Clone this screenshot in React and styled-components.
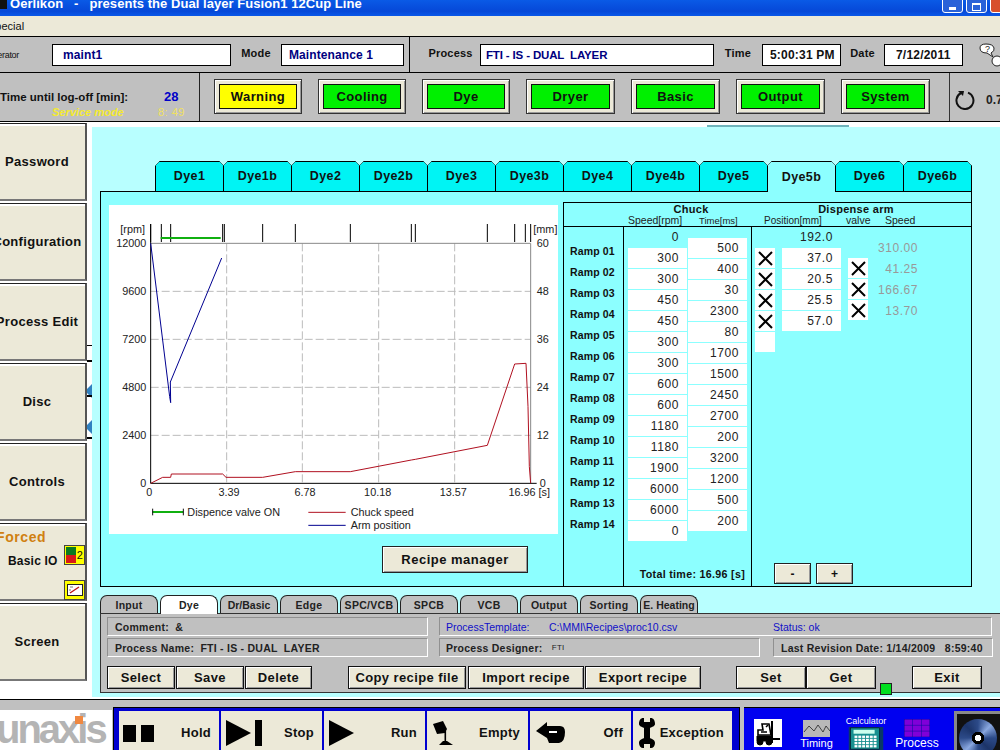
import React from 'react';
import styled, { createGlobalStyle } from 'styled-components';

const GlobalStyle = createGlobalStyle`
  * { box-sizing: border-box; }
  html, body { margin: 0; padding: 0; background: #fff; }
  body { font-family: "Liberation Sans", Arial, sans-serif; overflow: hidden; }
`;

const BUTTON_BG = '#ece9d8';
const GREY = '#c0c0c0';
const PANEL = '#8cffff';

const Page = styled.div`
  width: 1000px;
  height: 750px;
  display: flex;
  flex-direction: column;
  overflow: hidden;
  background: ${GREY};
`;

/* window chrome */
const TitleBar = styled.div`
  height: 16px;
  flex: none;
  display: flex;
  align-items: flex-end;
  overflow: hidden;
  background: linear-gradient(#0a5ae6, #0648d8 70%, #0a58e8);
`;

const AppIcon = styled.div`
  width: 7px;
  height: 9px;
  margin: 0 3px 7px 0;
  background: #111;
`;

const TitleText = styled.div`
  color: #fff;
  font-weight: bold;
  font-size: 13px;
  line-height: 16px;
  white-space: pre;
  letter-spacing: 0.05px;
  margin-bottom: 4px;
`;

const WindowButtons = styled.div`
  margin-left: auto;
  display: flex;
  gap: 3px;
  align-self: flex-start;
  margin-top: -8px;
  margin-right: -11px;
`;

const WindowButton = styled.div`
  width: 21px;
  height: 21px;
  border: 1px solid #fff;
  border-radius: 3px;
  background: ${(p) => (p.$close ? '#d8502c' : '#2a62d8')};
  display: flex;
  align-items: center;
  justify-content: center;
  padding-top: 8px;
`;

const MinGlyph = styled.div`
  width: 7px;
  height: 3px;
  background: #fff;
  margin-top: 3px;
`;

const MaxGlyph = styled.div`
  width: 9px;
  height: 8px;
  border: 1px solid #fff;
  border-top-width: 2px;
`;

const MenuBar = styled.div`
  height: 20px;
  flex: none;
  background: ${BUTTON_BG};
  display: flex;
  align-items: center;
  font-size: 11px;
  color: #111;
`;

const MenuItem = styled.div`
  margin-left: -12px;
`;

/* top status rows */
const StatusRow = styled.div`
  height: 37px;
  flex: none;
  display: flex;
  align-items: center;
  background: ${GREY};
  border-top: 1px solid #000;
  border-bottom: 1px solid #000;
  overflow: hidden;
`;

const SmallLabel = styled.div`
  width: 69px;
  margin-left: -17px;
  font-size: 9px;
  letter-spacing: -0.3px;
  padding-right: 33px;
  text-align: right;
  color: #111;
  white-space: nowrap;
`;

const FieldLabel = styled.div`
  width: ${(p) => p.$w}px;
  flex: none;
  font-size: 11px;
  font-weight: bold;
  letter-spacing: 0.2px;
  color: #111;
  text-align: center;
  padding-bottom: 3px;
  padding-left: ${(p) => p.$pl || 0}px;
`;

const Field = styled.div`
  width: ${(p) => p.$w}px;
  flex: none;
  height: 22px;
  background: #fff;
  border: 1px solid #000;
  font-size: ${(p) => (p.$tight ? 11.5 : 12)}px;
  font-weight: bold;
  line-height: 21px;
  color: ${(p) => (p.$dark ? '#111' : '#000080')};
  padding-left: ${(p) => p.$pl}px;
  white-space: pre;
  letter-spacing: ${(p) => (p.$tight ? '-0.15px' : p.$dark ? '0.2px' : '0.1px')};
`;

const RowDivider = styled.div`
  width: 1px;
  height: 100%;
  flex: none;
  margin-left: 5px;
  background: #000;
`;

const HelpBubble = styled.svg`
  flex: none;
  margin-left: 15px;
`;

const IndicatorRow = styled.div`
  height: 49px;
  flex: none;
  display: flex;
  background: ${GREY};
  border-bottom: 1px solid #000;
`;

const LogoffPanel = styled.div`
  width: 200px;
  flex: none;
  border-right: 1px solid #222;
  display: grid;
  grid-template-columns: 150px 1fr;
  grid-auto-rows: 15px;
  padding-top: 16px;
  align-items: center;
`;

const LogoffLabel = styled.div`
  font-size: 11.5px;
  font-weight: bold;
  color: #111;
  white-space: nowrap;
`;

const LogoffValue = styled.div`
  font-size: 13px;
  font-weight: bold;
  color: #0000c8;
  padding-left: 14px;
`;

const ServiceLabel = styled.div`
  font-size: 11px;
  font-weight: bold;
  font-style: italic;
  color: #f4ea30;
  padding-left: 52px;
  white-space: nowrap;
`;

const ServiceValue = styled.div`
  font-size: 11px;
  letter-spacing: 0.5px;
  color: #f0e060;
  padding-left: 8px;
`;

const IndicatorGroup = styled.div`
  display: flex;
  gap: 16px;
  padding: 6px 0 0 14px;
`;

const IndicatorButton = styled.div`
  width: ${(p) => p.$w || 88}px;
  height: 35px;
  padding: 4px;
  background: ${BUTTON_BG};
  border: 1px solid #333;
  box-shadow: inset 1px 1px 0 #fff, inset -1px -1px 0 #999;
`;

const IndicatorFace = styled.div`
  height: 100%;
  background: ${(p) => (p.$warn ? '#ffff00' : '#00f000')};
  border: 1px solid #111;
  display: flex;
  align-items: center;
  justify-content: center;
  font-size: 13px;
  font-weight: bold;
  letter-spacing: 0.4px;
  color: #111;
`;

const SpeedBox = styled.div`
  margin-left: auto;
  width: 51px;
  flex: none;
  border-left: 1px solid #333;
  display: flex;
  align-items: center;
  padding-left: 5px;
  padding-top: 6px;
  gap: 11px;
  font-size: 12px;
  font-weight: bold;
  color: #222;
  overflow: hidden;
`;

const SpeedIcon = styled.svg`
  flex: none;
`;

/* body */
const Body = styled.div`
  height: 578px;
  flex: none;
  display: flex;
  background: #fff;
  border-bottom: 1px solid #000;
  overflow: hidden;
`;

const Sidebar = styled.div`
  width: 98px;
  flex: none;
  margin-left: -11px;
  display: flex;
  flex-direction: column;
  gap: 2px;
  padding-top: 1px;
`;

const SideButton = styled.div`
  height: 78px;
  flex: none;
  background: ${BUTTON_BG};
  border-right: 2px solid #555;
  border-bottom: 2px solid #777;
  box-shadow: inset 0 2px 0 #fff;
  border-top: 1px solid #222;
  display: flex;
  align-items: center;
  justify-content: center;
  font-size: 13px;
  font-weight: bold;
  letter-spacing: 0.3px;
  color: #111;
  white-space: nowrap;
`;

const ForcedButton = styled(SideButton)`
  display: block;
  padding: 5px 0 0 7px;
`;

const ForcedLabel = styled.div`
  color: #d08010;
  font-size: 14px;
  line-height: 16px;
  letter-spacing: 0.6px;
`;

const ForcedRow = styled.div`
  display: flex;
  align-items: flex-start;
  justify-content: ${(p) => (p.$end ? 'flex-end' : 'space-between')};
  margin-top: ${(p) => p.$mt || 0}px;
  padding: 0 0 0 12px;
`;

const BasicLabel = styled.div`
  font-size: 12px;
  line-height: 15px;
  letter-spacing: 0.2px;
  margin-top: 9px;
`;

const StateBadge = styled.div`
  width: 21px;
  height: 20px;
  background: #ffff00;
  border: 1px solid #444;
  display: flex;
  align-items: center;
  justify-content: center;
  gap: 1px;
  font-size: 11px;
  font-weight: normal;
`;

const Gutter = styled.div`
  width: 5px;
  flex: none;
  padding-top: 1px;
  line-height: 0;
`;

const Main = styled.div`
  flex: 1;
  min-width: 0;
  display: flex;
  flex-direction: column;
  width: 908px;
`;

const TopStrip = styled.div`
  height: 5px;
  flex: none;
  padding-left: 615px;
`;

const TopPeek = styled.div`
  width: 142px;
  height: 2px;
  margin-top: 3px;
  background: #70b4bc;
`;

const Workspace = styled.div`
  height: 570px;
  flex: none;
  background: #b8ffff;
  padding: 34px 0 0 8px;
  display: flex;
  flex-direction: column;
`;

const DyeTabs = styled.div`
  display: flex;
  margin-left: 55px;
  height: 31px;
  flex: none;
  position: relative;
  z-index: 1;
`;

const DyeTab = styled.div`
  width: 69px;
  height: ${(p) => (p.$active ? 31 : 30)}px;
  flex: none;
  border: 1px solid #000;
  border-top: none;
  border-bottom: none;
  margin-right: -1px;
  clip-path: polygon(5px 0, calc(100% - 5px) 0, 100% 5px, 100% 100%, 0 100%, 0 5px);
  background-origin: border-box;
  background-image:
    linear-gradient(135deg, transparent 2.6px, #000 2.6px 3.9px, transparent 3.9px),
    linear-gradient(225deg, transparent 2.6px, #000 2.6px 3.9px, transparent 3.9px),
    linear-gradient(#000, #000);
  background-size: 100% 100%, 100% 100%, 100% 1px;
  background-repeat: no-repeat;
  background-color: ${(p) => (p.$active ? PANEL : '#00f4f4')};
  display: flex;
  align-items: center;
  justify-content: center;
  font-size: 12.5px;
  font-weight: bold;
  letter-spacing: 0.4px;
  color: #111;
`;

const RecipePanel = styled.div`
  width: 872px;
  height: 396px;
  flex: none;
  margin-top: -1px;
  background: ${PANEL};
  border: 1px solid #000;
  display: flex;
`;

const ChartColumn = styled.div`
  width: 462px;
  flex: none;
  padding: 13px 0 0 8px;
`;

const ChartCard = styled.svg`
  display: block;
  background: #fff;
`;

const RecipeManager = styled.div`
  width: 146px;
  height: 27px;
  margin: 12px 0 0 273px;
  background: ${BUTTON_BG};
  border: 1px solid #222;
  box-shadow: inset 1px 1px 0 #fff, inset -1px -1px 0 #999;
  display: flex;
  align-items: center;
  justify-content: center;
  font-size: 13px;
  font-weight: bold;
  letter-spacing: 0.5px;
  color: #111;
`;

const RecipeTable = styled.div`
  flex: 1;
  margin-top: 10px;
  border-top: 1px solid #000;
  border-left: 1px solid #000;
  display: flex;
  flex-direction: column;
  min-width: 0;
`;

const TableHead = styled.div`
  height: 24px;
  flex: none;
  border-bottom: 1px solid #000;
  display: grid;
  grid-template-columns: 59px 128px 1fr;
`;

const HeadGroup = styled.div`
  display: flex;
  flex-direction: column;
`;

const HeadTitle = styled.div`
  font-size: 11px;
  font-weight: bold;
  line-height: 12px;
  letter-spacing: 0.3px;
  color: #111;
  text-align: center;
  padding-left: ${(p) => p.$pl || 0}px;
  padding-right: ${(p) => p.$pr || 0}px;
`;

const HeadLabels = styled.div`
  display: flex;
  line-height: 11px;
  color: #222;
  white-space: nowrap;
  padding-left: ${(p) => p.$pl}px;
`;

const HeadLabel = styled.span`
  width: ${(p) => p.$w}px;
  flex: none;
  font-size: ${(p) => p.$size || 10.5}px;
`;

const TableBody = styled.div`
  flex: 1;
  display: grid;
  grid-template-columns: 59px 128px 1fr;
  min-height: 0;
`;

const RampColumn = styled.div`
  padding: 14px 0 0 6px;
`;

const RampLabel = styled.div`
  height: 21px;
  line-height: 21px;
  font-size: 10.5px;
  font-weight: bold;
  letter-spacing: 0.15px;
  color: #111;
  white-space: nowrap;
`;

const ValueColumn = styled.div`
  border-left: 1px solid #000;
  display: flex;
  flex-direction: column;
`;

const Stacks = styled.div`
  display: flex;
  align-items: flex-start;
  padding-left: ${(p) => p.$pl}px;
`;

const Stack = styled.div`
  width: ${(p) => p.$w}px;
  flex: none;
  margin-left: ${(p) => p.$ml || 0}px;
  padding-top: ${(p) => p.$pt || 0}px;
`;

const Value = styled.div`
  height: 20px;
  margin-bottom: 1px;
  background: ${(p) => (p.$bare ? 'transparent' : '#fff')};
  font-size: 12px;
  line-height: 20px;
  letter-spacing: 0.6px;
  color: #222;
  text-align: right;
  padding-right: 8px;
`;

const CheckCell = styled.div`
  height: 20px;
  margin-bottom: 1px;
  background: #fff;
  display: flex;
  align-items: center;
  justify-content: center;
`;

const SpeedValue = styled.div`
  height: 21px;
  line-height: 21px;
  font-size: 12px;
  letter-spacing: 0.55px;
  color: #999;
  text-align: right;
`;

const TotalTime = styled.div`
  margin-top: auto;
  height: 24px;
  font-size: 10.7px;
  font-weight: bold;
  letter-spacing: 0.3px;
  color: #111;
  text-align: right;
  padding-right: 6px;
  line-height: 24px;
  white-space: nowrap;
`;

const StepButtons = styled.div`
  margin-top: auto;
  display: flex;
  gap: 5px;
  padding: 0 0 2px 22px;
`;

const StepButton = styled.div`
  width: 37px;
  height: 21px;
  background: ${BUTTON_BG};
  border: 1px solid #222;
  box-shadow: inset 1px 1px 0 #fff, inset -1px -1px 0 #999;
  display: flex;
  align-items: center;
  justify-content: center;
  font-size: 12px;
  font-weight: bold;
  color: #111;
`;

/* lower tabs and info panel */
const LowerTabs = styled.div`
  display: flex;
  gap: 2px;
  height: 18px;
  flex: none;
  margin-top: 8px;
  position: relative;
  z-index: 1;
`;

const LowerTab = styled.div`
  width: 58px;
  height: ${(p) => (p.$active ? 19 : 18)}px;
  flex: none;
  background: ${(p) => (p.$active ? '#fff' : GREY)};
  border: 1px solid #222;
  border-bottom: none;
  border-radius: 7px 8px 0 0;
  display: flex;
  align-items: center;
  justify-content: center;
  font-size: 10.5px;
  font-weight: bold;
  letter-spacing: ${(p) => (p.$tight ? 0 : 0.3)}px;
  color: #222;
  white-space: nowrap;
`;

const InfoPanel = styled.div`
  height: 80px;
  flex: none;
  margin-top: 0;
  width: 920px;
  background: ${GREY};
  border: 1px solid #333;
  padding: 3px 0 0 6px;
  display: flex;
  flex-direction: column;
`;

const InfoGrid = styled.div`
  display: flex;
  gap: 11px;
`;

const InfoColumn = styled.div`
  display: flex;
  flex-direction: column;
  gap: 2px;
`;

const InfoLine = styled.div`
  display: flex;
  gap: 13px;
`;

const InfoBox = styled.div`
  width: ${(p) => p.$w}px;
  height: 19px;
  flex: none;
  border: 1px solid;
  border-color: #909090 #fff #fff #909090;
  display: flex;
  align-items: center;
  padding-left: ${(p) => p.$pl || 7}px;
  font-size: 10.5px;
  font-weight: bold;
  letter-spacing: 0.25px;
  color: #222;
  white-space: pre;
`;

const BlueText = styled.span`
  font-weight: normal;
  font-size: 10.5px;
  letter-spacing: 0;
  color: #1010c8;
  width: ${(p) => (p.$w ? `${p.$w}px` : 'auto')};
  flex: none;
`;

const Tiny = styled.span`
  font-weight: normal;
  font-size: 8px;
  margin-left: 3px;
`;

const ActionRow = styled.div`
  display: flex;
  align-items: flex-start;
  margin-top: 9px;
`;

const ActionButton = styled.div`
  width: ${(p) => p.$w}px;
  height: 23px;
  flex: none;
  margin-left: ${(p) => p.$ml || 0}px;
  background: ${BUTTON_BG};
  border: 1px solid #111;
  box-shadow: inset 1px 1px 0 #fff, inset -1px -1px 0 #999;
  display: flex;
  align-items: center;
  justify-content: center;
  font-size: 13px;
  font-weight: bold;
  letter-spacing: 0.4px;
  color: #111;
  white-space: nowrap;
`;

const StatusLamp = styled.div`
  width: 12px;
  height: 12px;
  flex: none;
  margin: 17px 0 0 4px;
  background: #00e020;
  border: 1px solid #222;
`;

/* footer */
const Footer = styled.div`
  flex: 1;
  display: flex;
  padding-top: 7px;
  overflow: hidden;
`;

const LogoBox = styled.div`
  width: 112px;
  flex: none;
  margin-top: 3px;
  background: #fff;
  position: relative;
  overflow: hidden;
`;

const LogoText = styled.div`
  font-size: 40px;
  line-height: 38px;
  font-weight: bold;
  letter-spacing: -3px;
  color: #b4b4b4;
  margin-left: -4px;
`;

const LogoDot = styled.div`
  position: absolute;
  left: 75px;
  top: 6px;
  width: 8px;
  height: 8px;
  background: #f08840;
`;

const CommandBar = styled.div`
  width: 627px;
  flex: none;
  background: #0000d0;
  border: 1px solid #000;
  border-bottom: none;
  padding: 3px 0 0 5px;
  display: flex;
  gap: 2px;
  margin-left: 1px;
`;

const CommandButton = styled.div`
  width: ${(p) => p.$w || 101}px;
  flex: none;
  background: ${BUTTON_BG};
  display: flex;
  align-items: center;
  justify-content: space-between;
  padding: 4px 8px 0 ${(p) => p.$pl || 4}px;
  font-size: 13px;
  font-weight: bold;
  letter-spacing: 0.25px;
  color: #111;
`;

const LauncherBar = styled.div`
  flex: 1;
  margin-left: 4px;
  background: #0000f0;
  display: flex;
  padding-left: 10px;
  border-top: 1px solid #000;
`;

const LauncherItem = styled.div`
  width: ${(p) => p.$w}px;
  flex: none;
  margin-left: ${(p) => p.$ml || 0}px;
  padding-top: ${(p) => p.$pt || 0}px;
  display: flex;
  flex-direction: column;
  align-items: center;
  color: #fff;
  font-size: ${(p) => p.$size || 11}px;
  line-height: 12px;
  white-space: nowrap;
`;

const ForkliftTile = styled.div`
  width: 28px;
  height: 28px;
  background: #fff;
  margin-top: 11px;
  display: flex;
  align-items: center;
  justify-content: center;
`;

const DiscTile = styled.div`
  width: 46px;
  flex: none;
  margin-left: auto;
  margin-top: 3px;
  border: 3px solid #888;
  border-right: none;
  border-bottom: none;
  background: #111;
  padding: 5px 0 0 2px;
  overflow: hidden;
`;

const Disc = styled.div`
  width: 38px;
  height: 38px;
  border-radius: 50%;
  background:
    radial-gradient(circle, #fff 0 3px, #000 3.5px 6px, transparent 6.5px),
    conic-gradient(#2c4a88, #8aa8e0, #2c4a88, #1c3468, #2c4a88, #8aa8e0, #2c4a88, #1c3468, #2c4a88);
`;

const dyeTabs = ['Dye1', 'Dye1b', 'Dye2', 'Dye2b', 'Dye3', 'Dye3b', 'Dye4', 'Dye4b', 'Dye5', 'Dye5b', 'Dye6', 'Dye6b'];
const lowerTabs = ['Input', 'Dye', 'Dr/Basic', 'Edge', 'SPC/VCB', 'SPCB', 'VCB', 'Output', 'Sorting', 'E. Heating'];
const indicators = [
  ['Warning', 88, true],
  ['Cooling', 88],
  ['Dye', 88],
  ['Dryer', 89],
  ['Basic', 89],
  ['Output', 89],
  ['System', 89],
];
const speeds = ['300', '300', '450', '450', '300', '300', '600', '600', '1180', '1180', '1900', '6000', '6000', '0'];
const times = ['500', '400', '30', '2300', '80', '1700', '1500', '2450', '2700', '200', '3200', '1200', '500', '200'];
const positions = ['37.0', '20.5', '25.5', '57.0'];
const armSpeeds = ['310.00', '41.25', '166.67', '13.70'];

const redLine = [[152, 880], [188, 862], [212, 862], [214, 852], [368, 852], [378, 862], [488, 862], [586, 845], [751, 845], [934, 810], [946, 808], [1162, 766], [1244, 522], [1278, 520], [1284, 650], [1288, 830], [1292, 880]];
const blueLine = [[152, 160], [209, 620], [212, 638], [211, 576], [365, 204]];
const marks = [152, 184, 212, 368, 373, 488, 586, 751, 934, 946, 1162, 1244, 1276, 1292];
const gridX = [380, 607, 836, 1064];
const gridY = [304, 448, 592, 736];
const leftAxis = [['12000', 160], ['9600', 304], ['7200', 448], ['4800', 592], ['2400', 736], ['0', 880]];
const rightAxis = [['60', 160], ['48', 304], ['36', 448], ['24', 592], ['12', 736], ['0', 880]];
const bottomAxis = [['0', 148], ['3.39', 387], ['6.78', 615], ['10.18', 833], ['13.57', 1060], ['16.96', 1266]];

const toPoints = (line) => line.map((p) => p.join(',')).join(' ');

const chartFont = { fontFamily: '"Liberation Sans", Arial, sans-serif', fontSize: 32.5, fill: '#222' };

// drawn on the 3x coordinates of the picture, so one px of stroke is 3 units
const Chart = () => (
  <ChartCard width="449" height="329" viewBox="27 45 1347 987">
    {gridY.map((y) => (
      <line key={y} x1="152" x2="1292" y1={y} y2={y} stroke="#bbb" strokeWidth="3" strokeDasharray="24 9" />
    ))}
    {gridX.map((x) => (
      <line key={x} x1={x} x2={x} y1="160" y2="880" stroke="#bbb" strokeWidth="3" strokeDasharray="24 9" />
    ))}
    <line x1="152" x2="1292" y1="160" y2="160" stroke="#888" strokeWidth="3" />
    <line x1="1292" x2="1292" y1="160" y2="880" stroke="#888" strokeWidth="3" />
    <line x1="152" x2="152" y1="102" y2="880" stroke="#000" strokeWidth="3" />
    <line x1="152" x2="1310" y1="880" y2="880" stroke="#000" strokeWidth="3" />
    {marks.map((x) => (
      <line key={x} x1={x} x2={x} y1="102" y2="156" stroke="#000" strokeWidth="3" />
    ))}
    <line x1="182" x2="362" y1="144" y2="144" stroke="#10b010" strokeWidth="6" />
    <polyline points={toPoints(redLine)} fill="none" stroke="#b01020" strokeWidth="3" />
    <polyline points={toPoints(blueLine)} fill="none" stroke="#000090" strokeWidth="3" />
    <text {...chartFont} x="61" y="129">[rpm]</text>
    <text {...chartFont} x="1300" y="129">[mm]</text>
    {leftAxis.map(([t, y]) => (
      <text key={t} {...chartFont} x="139" y={y + 12} textAnchor="end">{t}</text>
    ))}
    {rightAxis.map(([t, y]) => (
      <text key={t} {...chartFont} x="1328" y={y + 12} textAnchor="middle">{t}</text>
    ))}
    {bottomAxis.map(([t, x]) => (
      <text key={t} {...chartFont} x={x} y="918" textAnchor="middle">{t}</text>
    ))}
    <text {...chartFont} x="1333" y="918" textAnchor="middle">[s]</text>
    <line x1="157" x2="250" y1="966" y2="966" stroke="#10b010" strokeWidth="6" />
    <line x1="158" x2="158" y1="956" y2="976" stroke="#111" strokeWidth="3" />
    <line x1="250" x2="250" y1="956" y2="976" stroke="#111" strokeWidth="3" />
    <text {...chartFont} x="262" y="978">Dispence valve ON</text>
    <line x1="625" x2="737" y1="967" y2="967" stroke="#b01020" strokeWidth="3" />
    <text {...chartFont} x="752" y="978">Chuck speed</text>
    <line x1="625" x2="737" y1="1006" y2="1006" stroke="#000090" strokeWidth="3" />
    <text {...chartFont} x="752" y="1017">Arm position</text>
  </ChartCard>
);

const Cross = () => (
  <svg width="15" height="15" viewBox="0 0 15 15">
    <path d="M1 1 L14 14 M14 1 L1 14" stroke="#000" strokeWidth="2" />
  </svg>
);

const HoldIcon = () => (
  <svg width="32" height="18" viewBox="0 0 32 18">
    <rect x="0" y="1" width="13" height="17" />
    <rect x="18" y="1" width="13" height="17" />
  </svg>
);

const StopIcon = () => (
  <svg width="37" height="26" viewBox="0 0 37 26">
    <polygon points="0,0 25,13 0,26" />
    <rect x="29" y="0" width="7" height="26" />
  </svg>
);

const RunIcon = () => (
  <svg width="26" height="26" viewBox="0 0 26 26">
    <polygon points="0,0 25,13 0,26" />
  </svg>
);

const PourIcon = () => (
  <svg width="22" height="24" viewBox="0 0 22 24">
    <polygon points="1,3 11,0 15,8 13,12 5,13" />
    <rect x="12.5" y="10" width="1.6" height="10" />
    <polygon points="7,24 11,20 15,20 21,24" />
  </svg>
);

const OffIcon = () => (
  <svg width="29" height="21" viewBox="0 0 29 21">
    <path d="M0 9 L11 0 L11 4 L24 4 Q29 4 29 10 Q29 20 23 21 L13 21 L11 16 Z" />
    <rect x="13" y="9" width="8" height="2" fill="#fff" />
  </svg>
);

const WrenchIcon = () => (
  <svg width="16" height="30" viewBox="0 0 16 30">
    <path d="M0 6 C0 2 2 0 4 0 L5 0 L5 4 L11 4 L11 0 L12 0 C14 0 16 2 16 6 C16 8 13 9 11 10 L11 20 C13 21 16 22 16 25 C16 28 14 30 12 30 L11 30 L11 26 L5 26 L5 30 L4 30 C2 30 0 28 0 25 C0 22 3 21 5 20 L5 10 C3 9 0 8 0 6 Z" />
  </svg>
);

const ForkliftIcon = () => (
  <svg width="26" height="26" viewBox="0 0 26 26" fill="none" stroke="#000">
    <path d="M7 4 L14 4 L16 15 L3 15 L3 10 L8 10 Z" strokeWidth="1.6" />
    <path d="M17 1 L17 23 M17 19 L25 19" strokeWidth="2" />
    <path d="M11 7 l2 -2 M6 12 h6" strokeWidth="1.5" />
    <path d="M2 16 L17 16 L17 21 L2 21 Z" fill="#000" strokeWidth="1" />
    <circle cx="5" cy="22" r="3" fill="#000" />
    <circle cx="14" cy="22" r="3" fill="#000" />
  </svg>
);

const TimingIcon = () => (
  <svg width="27" height="17" viewBox="0 0 27 17">
    <rect width="27" height="17" fill="#b8b8b8" />
    <path d="M1 12 L6 6 L11 11 L15 5 L20 12 L23 6 L27 11" fill="none" stroke="#222" strokeWidth="0.8" />
  </svg>
);

const CalculatorIcon = () => (
  <svg width="36" height="24" viewBox="0 0 36 24">
    <rect width="36" height="24" fill="#083868" />
    <rect x="2" y="1" width="30" height="22" fill="#189090" stroke="#000" strokeWidth="0.5" />
    <rect x="5" y="3" width="22" height="4" fill="#cfe" />
    {[0, 1, 2, 3].map((r) =>
      [0, 1, 2, 3, 4, 5].map((c) => (
        <rect key={`${r}-${c}`} x={6 + c * 4} y={9 + r * 3.3} width="3" height="2.4" fill="#fff" />
      )),
    )}
  </svg>
);

const ProcessIcon = () => (
  <svg width="26" height="18" viewBox="0 0 26 18">
    <rect width="26" height="18" fill="#000a9c" />
    {[0, 1, 2].map((r) =>
      [0, 1, 2].map((c) => (
        <rect key={`${r}-${c}`} x={0.5 + c * 8.5} y={0.5 + r * 5.9} width="8" height="5.4" fill="#8000d8" />
      )),
    )}
  </svg>
);

const IoIcon = () => (
  <svg width="10" height="16" viewBox="0 0 10 16">
    <rect width="10" height="8" fill="#0a7a20" />
    <rect y="8" width="10" height="8" fill="#d81818" />
  </svg>
);

const GaugeIcon = () => (
  <svg width="16" height="12" viewBox="0 0 16 12">
    <rect x="0.5" y="0.5" width="15" height="11" fill="#fff" stroke="#222" />
    <path d="M3 9 L12 3" stroke="#c01010" strokeWidth="1.3" />
    <path d="M3 3 h3 M2 6 h2" stroke="#555" strokeWidth="0.8" />
  </svg>
);

const SideDashes = () => (
  <svg width="5" height="320" viewBox="0 0 5 320">
    <rect y="222" width="5" height="1" />
    <rect y="237" width="5" height="2" />
    <polygon points="0,266 5,261 5,275 0,270" fill="#3080c0" />
    <rect y="272" width="5" height="2" />
    <polygon points="0,302 5,297 5,311 0,306" fill="#3080c0" />
    <rect y="314" width="5" height="2" />
  </svg>
);

export default function App() {
  return (
    <Page>
      <GlobalStyle />
      <TitleBar>
        <AppIcon />
        <TitleText>{'Oerlikon   -   presents the Dual layer Fusion1 12Cup Line'}</TitleText>
        <WindowButtons>
          <WindowButton><MinGlyph /></WindowButton>
          <WindowButton><MaxGlyph /></WindowButton>
          <WindowButton $close />
        </WindowButtons>
      </TitleBar>
      <MenuBar>
        <MenuItem>Special</MenuItem>
      </MenuBar>
      <StatusRow>
        <SmallLabel>Operator</SmallLabel>
        <Field $w={179} $pl={10}>maint1</Field>
        <FieldLabel $w={50}>Mode</FieldLabel>
        <Field $w={123} $pl={7}>Maintenance 1</Field>
        <RowDivider />
        <FieldLabel $w={70} $pl={11}>Process</FieldLabel>
        <Field $w={234} $pl={5} $tight>{'FTI - IS - DUAL  LAYER'}</Field>
        <FieldLabel $w={48}>Time</FieldLabel>
        <Field $w={79} $pl={7} $dark>5:00:31 PM</Field>
        <FieldLabel $w={43}>Date</FieldLabel>
        <Field $w={79} $pl={11} $dark>7/12/2011</Field>
        <HelpBubble width="22" height="24" viewBox="0 0 22 24">
          <path d="M2 5 Q2 1 8 1 Q15 1 16 5 Q17 8 13 10 L15 14 L9 10 Q2 10 2 5 Z" fill="#fff" stroke="#222" />
          <text x="7" y="9" fontSize="9" fontFamily="Liberation Sans" fill="#222">?</text>
          <circle cx="19" cy="18" r="5" fill="#fff" stroke="#222" />
        </HelpBubble>
      </StatusRow>
      <IndicatorRow>
        <LogoffPanel>
          <LogoffLabel>Time until log-off [min]:</LogoffLabel>
          <LogoffValue>28</LogoffValue>
          <ServiceLabel>Service mode</ServiceLabel>
          <ServiceValue>8: 49</ServiceValue>
        </LogoffPanel>
        <IndicatorGroup>
          {indicators.map(([label, w, warn]) => (
            <IndicatorButton key={label} $w={w}>
              <IndicatorFace $warn={warn}>{label}</IndicatorFace>
            </IndicatorButton>
          ))}
        </IndicatorGroup>
        <SpeedBox>
          <SpeedIcon width="20" height="20" viewBox="0 0 20 20">
            <path d="M6 3 A8.5 8.5 0 1 0 13 2.6" fill="none" stroke="#111" strokeWidth="2" />
            <polygon points="3,1 9,1 8,6" fill="#111" />
          </SpeedIcon>
          0.7
        </SpeedBox>
      </IndicatorRow>
      <Body>
        <Sidebar>
          <SideButton>Password</SideButton>
          <SideButton>Configuration</SideButton>
          <SideButton>Process Edit</SideButton>
          <SideButton>Disc</SideButton>
          <SideButton>Controls</SideButton>
          <ForcedButton>
            <ForcedLabel>Forced</ForcedLabel>
            <ForcedRow>
              <BasicLabel>Basic IO</BasicLabel>
              <StateBadge><IoIcon />2</StateBadge>
            </ForcedRow>
            <ForcedRow $end $mt={11}>
              <StateBadge><GaugeIcon /></StateBadge>
            </ForcedRow>
          </ForcedButton>
          <SideButton>Screen</SideButton>
        </Sidebar>
        <Gutter><SideDashes /></Gutter>
        <Main>
          <TopStrip><TopPeek /></TopStrip>
          <Workspace>
            <DyeTabs>
              {dyeTabs.map((t) => (
                <DyeTab key={t} $active={t === 'Dye5b'}>{t}</DyeTab>
              ))}
            </DyeTabs>
            <RecipePanel>
              <ChartColumn>
                <Chart />
                <RecipeManager>Recipe manager</RecipeManager>
              </ChartColumn>
              <RecipeTable>
                <TableHead>
                  <div />
                  <HeadGroup>
                    <HeadTitle $pl={8}>Chuck</HeadTitle>
                    <HeadLabels $pl={5}>
                      <HeadLabel $w={71}>Speed[rpm]</HeadLabel>
                      <HeadLabel $w={50} $size={9.5}>Time[ms]</HeadLabel>
                    </HeadLabels>
                  </HeadGroup>
                  <HeadGroup>
                    <HeadTitle $pr={10}>Dispense arm</HeadTitle>
                    <HeadLabels $pl={13}>
                      <HeadLabel $w={82} $size={10}>Position[mm]</HeadLabel>
                      <HeadLabel $w={39}>valve</HeadLabel>
                      <HeadLabel $w={40}>Speed</HeadLabel>
                    </HeadLabels>
                  </HeadGroup>
                </TableHead>
                <TableBody>
                  <RampColumn>
                    {speeds.map((_, i) => (
                      <RampLabel key={i}>Ramp {String(i + 1).padStart(2, '0')}</RampLabel>
                    ))}
                  </RampColumn>
                  <ValueColumn>
                    <Stacks $pl={4}>
                      <Stack $w={59}>
                        <Value $bare>0</Value>
                        {speeds.map((v, i) => (
                          <Value key={i}>{v}</Value>
                        ))}
                      </Stack>
                      <Stack $w={59} $ml={1} $pt={11}>
                        {times.map((v, i) => (
                          <Value key={i}>{v}</Value>
                        ))}
                      </Stack>
                    </Stacks>
                    <TotalTime>Total time: 16.96 [s]</TotalTime>
                  </ValueColumn>
                  <ValueColumn>
                    <Stacks $pl={3}>
                      <Stack $w={20} $pt={21}>
                        {positions.map((v) => (
                          <CheckCell key={v}><Cross /></CheckCell>
                        ))}
                        <CheckCell />
                      </Stack>
                      <Stack $w={59} $ml={7}>
                        <Value $bare>192.0</Value>
                        {positions.map((v) => (
                          <Value key={v}>{v}</Value>
                        ))}
                      </Stack>
                      <Stack $w={20} $ml={7} $pt={31}>
                        <CheckCell><Cross /></CheckCell>
                        <CheckCell><Cross /></CheckCell>
                        <CheckCell><Cross /></CheckCell>
                      </Stack>
                      <Stack $w={50} $pt={11}>
                        {armSpeeds.map((v) => (
                          <SpeedValue key={v}>{v}</SpeedValue>
                        ))}
                      </Stack>
                    </Stacks>
                    <StepButtons>
                      <StepButton>-</StepButton>
                      <StepButton>+</StepButton>
                    </StepButtons>
                  </ValueColumn>
                </TableBody>
              </RecipeTable>
            </RecipePanel>
            <LowerTabs>
              {lowerTabs.map((t) => (
                <LowerTab key={t} $active={t === 'Dye'} $tight={t.length > 7}>{t}</LowerTab>
              ))}
            </LowerTabs>
            <InfoPanel>
              <InfoGrid>
                <InfoColumn>
                  <InfoBox $w={321}>{'Comment:  &'}</InfoBox>
                  <InfoBox $w={321}>{'Process Name:  FTI - IS - DUAL  LAYER'}</InfoBox>
                </InfoColumn>
                <InfoColumn>
                  <InfoBox $w={553} $pl={6}>
                    <BlueText $w={103}>ProcessTemplate:</BlueText>
                    <BlueText $w={224}>{'C:\\MMI\\Recipes\\proc10.csv'}</BlueText>
                    <BlueText>Status: ok</BlueText>
                  </InfoBox>
                  <InfoLine>
                    <InfoBox $w={321} $pl={6}>Process Designer:  <Tiny>FTI</Tiny></InfoBox>
                    <InfoBox $w={220}>{'Last Revision Date: 1/14/2009   8:59:40'}</InfoBox>
                  </InfoLine>
                </InfoColumn>
              </InfoGrid>
              <ActionRow>
                <ActionButton $w={68}>Select</ActionButton>
                <ActionButton $w={68} $ml={1}>Save</ActionButton>
                <ActionButton $w={67} $ml={1}>Delete</ActionButton>
                <ActionButton $w={118} $ml={36}>Copy recipe file</ActionButton>
                <ActionButton $w={116} $ml={2}>Import recipe</ActionButton>
                <ActionButton $w={116} $ml={1}>Export recipe</ActionButton>
                <ActionButton $w={70} $ml={35}>Set</ActionButton>
                <ActionButton $w={70}>Get</ActionButton>
                <StatusLamp />
                <ActionButton $w={70} $ml={20}>Exit</ActionButton>
              </ActionRow>
            </InfoPanel>
          </Workspace>
        </Main>
      </Body>
      <Footer>
        <LogoBox>
          <LogoText>unaxis</LogoText>
          <LogoDot />
        </LogoBox>
        <CommandBar>
          <CommandButton $w={100}><HoldIcon />Hold</CommandButton>
          <CommandButton $pl={5}><StopIcon />Stop</CommandButton>
          <CommandButton $pl={5}><RunIcon />Run</CommandButton>
          <CommandButton $pl={5}><PourIcon />Empty</CommandButton>
          <CommandButton $pl={6}><OffIcon />Off</CommandButton>
          <CommandButton $w={99} $pl={6}><WrenchIcon />Exception</CommandButton>
        </CommandBar>
        <LauncherBar>
          <ForkliftTile><ForkliftIcon /></ForkliftTile>
          <LauncherItem $w={27} $ml={21} $pt={12}>
            <TimingIcon />
            Timing
          </LauncherItem>
          <LauncherItem $w={36} $ml={18} $pt={7} $size={9}>
            Calculator
            <CalculatorIcon />
          </LauncherItem>
          <LauncherItem $w={40} $ml={13} $pt={11} $size={12}>
            <ProcessIcon />
            Process
          </LauncherItem>
          <DiscTile><Disc /></DiscTile>
        </LauncherBar>
      </Footer>
    </Page>
  );
}
